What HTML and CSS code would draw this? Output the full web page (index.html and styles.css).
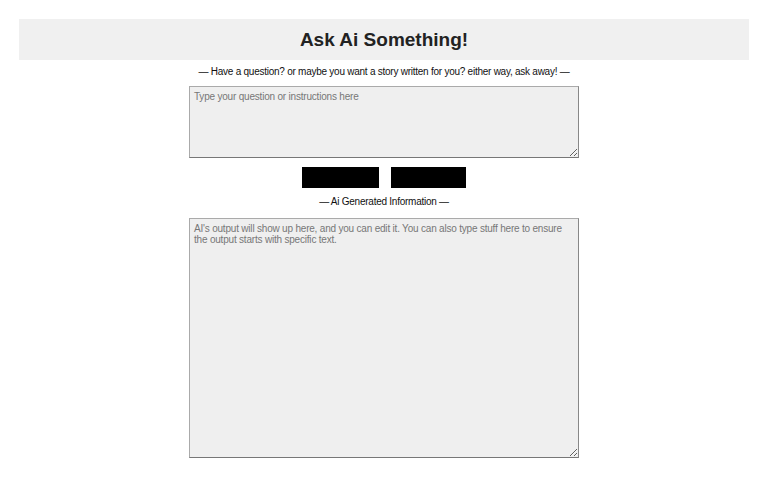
FILE: index.html
```html
<!DOCTYPE html>
<html lang="en">
<head>
    <meta charset="UTF-8">
    <meta name="viewport" content="width=device-width, initial-scale=1.0">
    <title>Ask Ai Something!</title>
    <link rel="stylesheet" href="styles.css">
</head>
<body>
    <div class="header">
        <h1>Ask Ai Something!</h1>
    </div>
    <p class="caption">&mdash; Have a question? or maybe you want a story written for you? either way, ask away! &mdash;</p>

    <textarea class="prompt" id="promptInput" placeholder="Type your question or instructions here"></textarea>

    <div class="buttons">
        <button class="btn-ask" onclick="askAi()">Ask</button>
        <button class="btn-clear" onclick="clearAll()">Clear</button>
    </div>

    <p class="caption small">&mdash; Ai Generated Information &mdash;</p>

    <textarea class="output" id="outputBox" placeholder="AI's output will show up here, and you can edit it. You can also type stuff here to ensure the output starts with specific text."></textarea>

    <script>
        function askAi() {
            // sem servidor por enquanto
        }
        function clearAll() {
            document.getElementById('promptInput').value = '';
            document.getElementById('outputBox').value = '';
        }
    </script>
</body>
</html>
```

FILE: styles.css
```css
body {
    font-family: "Liberation Sans", Arial, sans-serif;
    margin: 0;
    padding: 19px;
    display: flex;
    flex-direction: column;
    align-items: center;
}
.header {
    align-self: stretch;
    background: #f0f0f0;
    height: 41px;
    display: flex;
    align-items: center;
    justify-content: center;
}
.header h1 {
    margin: 0;
    font-size: 19px;
    color: #222;
}
.caption {
    margin: 5px 0 7px;
    font-size: 10px;
    letter-spacing: -0.25px;
    color: #111;
    line-height: 14px;
}
.caption.small {
    margin: 7px 0 9px;
}
textarea {
    width: 390px;
    box-sizing: border-box;
    background: #efefef;
    border: 1px solid #aaa;
    border-bottom-color: #777;
    border-right-color: #888;
    padding: 4px 4px;
    font-family: "Liberation Sans", Arial, sans-serif;
    font-size: 10px;
    letter-spacing: -0.2px;
    line-height: 11px;
    color: #333;
    display: block;
}
textarea::placeholder {
    color: #777;
}
.prompt {
    height: 72px;
}
.output {
    height: 240px;
}
.buttons {
    display: flex;
    gap: 12px;
    margin-top: 9px;
}
.buttons button {
    height: 21px;
    background: #000;
    color: #000;
    border: none;
    cursor: pointer;
}
.btn-ask {
    width: 77px;
}
.btn-clear {
    width: 75px;
}
```
